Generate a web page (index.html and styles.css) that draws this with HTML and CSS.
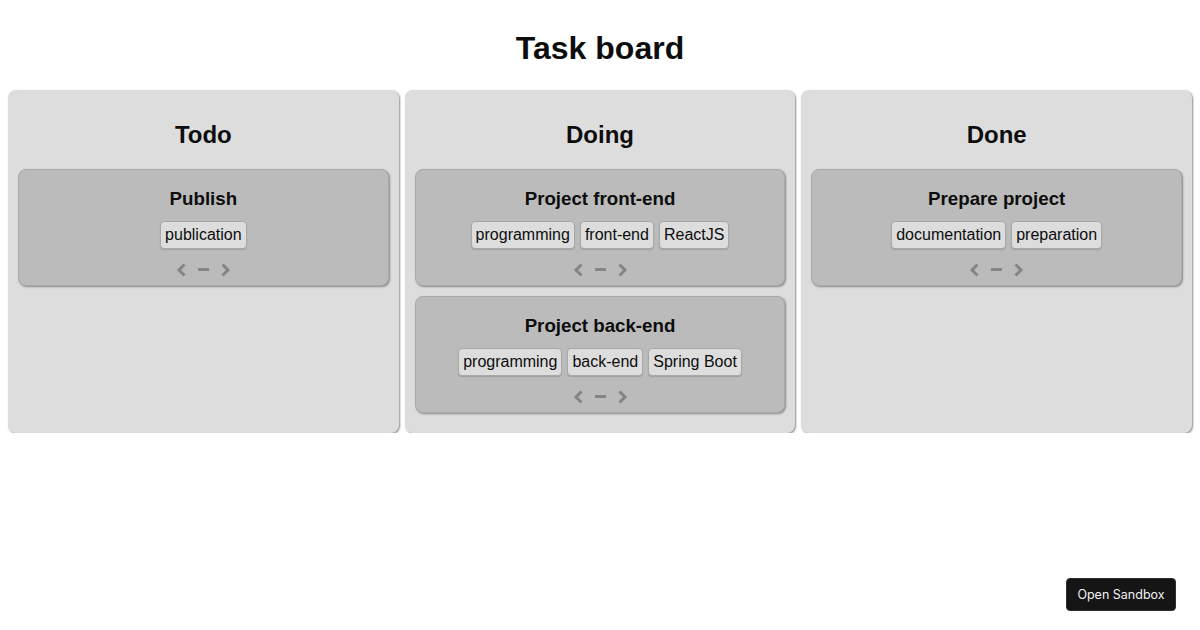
FILE: index.html
```html
<!DOCTYPE html>
<html lang="en">
<head>
<meta charset="utf-8">
<title>Task board</title>
<link rel="stylesheet" href="styles.css">
</head>
<body>
<div class="page">
  <h1 class="board-title">Task board</h1>
  <div class="board">
    <section class="column">
      <h2 class="column-title">Todo</h2>
      <article class="card">
        <h3 class="card-title">Publish</h3>
        <div class="tags"><span class="tag">publication</span></div>
        <div class="controls">
          <svg class="chev" viewBox="0 0 10 14" width="10" height="14"><polyline points="8.5,1.5 3,7 8.5,12.5"/></svg>
          <span class="dash"></span>
          <svg class="chev" viewBox="0 0 10 14" width="10" height="14"><polyline points="1.5,1.5 7,7 1.5,12.5"/></svg>
        </div>
      </article>
    </section>
    <section class="column">
      <h2 class="column-title">Doing</h2>
      <article class="card">
        <h3 class="card-title">Project front-end</h3>
        <div class="tags"><span class="tag">programming</span><span class="tag">front-end</span><span class="tag">ReactJS</span></div>
        <div class="controls">
          <svg class="chev" viewBox="0 0 10 14" width="10" height="14"><polyline points="8.5,1.5 3,7 8.5,12.5"/></svg>
          <span class="dash"></span>
          <svg class="chev" viewBox="0 0 10 14" width="10" height="14"><polyline points="1.5,1.5 7,7 1.5,12.5"/></svg>
        </div>
      </article>
      <article class="card">
        <h3 class="card-title">Project back-end</h3>
        <div class="tags"><span class="tag">programming</span><span class="tag">back-end</span><span class="tag">Spring Boot</span></div>
        <div class="controls">
          <svg class="chev" viewBox="0 0 10 14" width="10" height="14"><polyline points="8.5,1.5 3,7 8.5,12.5"/></svg>
          <span class="dash"></span>
          <svg class="chev" viewBox="0 0 10 14" width="10" height="14"><polyline points="1.5,1.5 7,7 1.5,12.5"/></svg>
        </div>
      </article>
    </section>
    <section class="column">
      <h2 class="column-title">Done</h2>
      <article class="card">
        <h3 class="card-title">Prepare project</h3>
        <div class="tags"><span class="tag">documentation</span><span class="tag">preparation</span></div>
        <div class="controls">
          <svg class="chev" viewBox="0 0 10 14" width="10" height="14"><polyline points="8.5,1.5 3,7 8.5,12.5"/></svg>
          <span class="dash"></span>
          <svg class="chev" viewBox="0 0 10 14" width="10" height="14"><polyline points="1.5,1.5 7,7 1.5,12.5"/></svg>
        </div>
      </article>
    </section>
  </div>
</div>
<a class="sandbox-btn" href="#">Open Sandbox</a>
</body>
</html>
```

FILE: styles.css
```css
html, body {
  margin: 0;
  padding: 0;
  background: #fff;
}

body {
  font-family: "Liberation Sans", Arial, sans-serif;
  color: #0d0d0d;
}

.page {
  padding: 0 8px;
}

.board-title {
  margin: 30px 0 23px;
  font-size: 32px;
  font-weight: bold;
  text-align: center;
  line-height: normal;
}

.board {
  display: flex;
  gap: 6px;
  align-items: stretch;
}

.column {
  flex: 1 1 0;
  background: #dddddd;
  border-radius: 8px;
  padding: 10px;
  box-shadow: 1px 1px 2px #8e8e8e;
  text-align: center;
}

.column-title {
  margin: 21px 0 20px;
  font-size: 24px;
  font-weight: bold;
  line-height: normal;
}

.card {
  margin: 10px 0;
  background: #bbbbbb;
  border: 1px solid #a9a9a9;
  border-radius: 8px;
  box-shadow: 1px 1px 2px #8a8a8a;
  padding: 0 10px 5px;
}

.card-title {
  margin: 18px 0 11px;
  font-size: 18.72px;
  font-weight: bold;
  line-height: 22px;
}

.tags {
  display: flex;
  justify-content: center;
  flex-wrap: wrap;
  gap: 5px;
}

.tag {
  display: inline-block;
  background: #dddddd;
  border: 1px solid #a8a8a8;
  border-radius: 4px;
  box-shadow: 0 1px 1px rgba(0, 0, 0, 0.15);
  padding: 4px;
  font-size: 16px;
  line-height: 18px;
  color: #0d0d0d;
}

.controls {
  margin-top: 10px;
  height: 21px;
  display: flex;
  justify-content: center;
  align-items: center;
  gap: 12px;
}

.chev {
  display: block;
}

.chev polyline {
  fill: none;
  stroke: #858585;
  stroke-width: 3;
  stroke-linejoin: miter;
}

.dash {
  display: block;
  width: 11px;
  height: 3px;
  background: #858585;
}

.sandbox-btn {
  position: fixed;
  right: 24px;
  bottom: 19px;
  width: 110px;
  height: 33px;
  box-sizing: border-box;
  display: flex;
  align-items: center;
  justify-content: center;
  background: #151515;
  border: 1px solid #2e2e2e;
  border-radius: 4px;
  color: #f2f2f2;
  font-family: Inter, "Liberation Sans", sans-serif;
  font-size: 12.5px;
  text-decoration: none;
}
```
